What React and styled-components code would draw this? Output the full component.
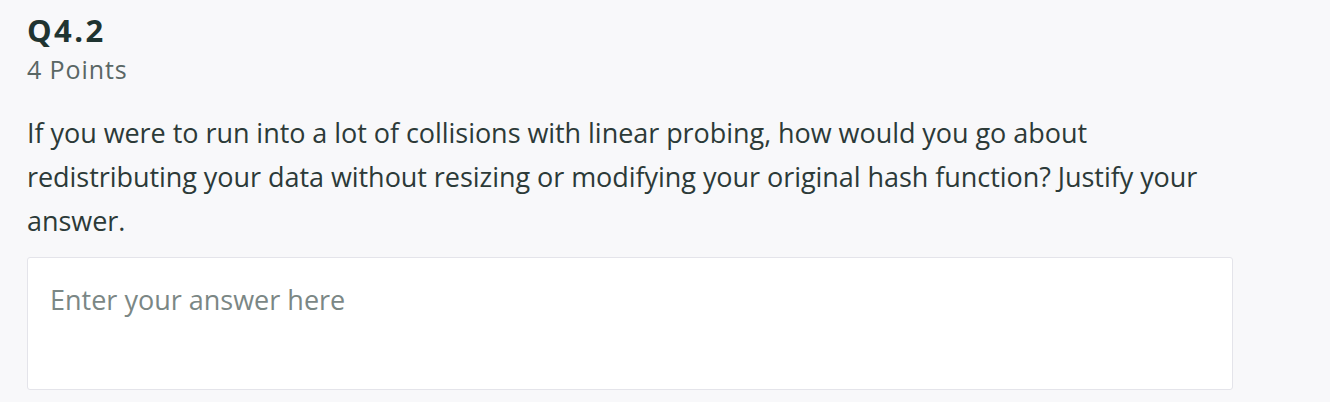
import React from "react";
import styled, { createGlobalStyle } from "styled-components";

const GlobalStyle = createGlobalStyle`
  html, body {
    margin: 0;
    padding: 0;
    background: #f8f8fa;
  }
  body {
    font-family: "Open Sans", "Liberation Sans", sans-serif;
  }
`;

const Question = () => {
  return (
    <Wrapper>
      <Header>
        <Title>Q4.2</Title>
        <Points>4 Points</Points>
      </Header>
      <Prompt>
        If you were to run into a lot of collisions with linear probing, how would you go about
        redistributing your data without resizing or modifying your original hash function? Justify your
        answer.
      </Prompt>
      <Answer placeholder="Enter your answer here" />
    </Wrapper>
  );
};

const Wrapper = styled.div`
  width: 1206px;
  padding: 12px 0 0 27px;
  box-sizing: content-box;
`;

const Header = styled.div`
  display: flex;
  flex-direction: column;
`;

const Title = styled.h2`
  margin: 0;
  font-size: 31px;
  line-height: 36px;
  font-weight: 700;
  letter-spacing: 2.4px;
  color: #1f3431;
`;

const Points = styled.span`
  margin-top: 6px;
  font-size: 25px;
  line-height: 30px;
  letter-spacing: 0.9px;
  color: #5a6765;
`;

const Prompt = styled.p`
  margin: 27px 0 14px;
  font-size: 27px;
  line-height: 44px;
  letter-spacing: -0.05px;
  color: #2c3a38;
`;

const Answer = styled.textarea`
  display: block;
  width: 100%;
  height: 133px;
  box-sizing: border-box;
  padding: 23px 22px;
  border: 1px solid #e4e4ea;
  border-radius: 3px;
  background: #ffffff;
  resize: none;
  font-family: inherit;
  font-size: 27px;
  color: #2c3a38;
  outline: none;

  &::placeholder {
    color: #7b8785;
  }
`;

const App = () => (
  <>
    <GlobalStyle />
    <Question />
  </>
);

export default App;
